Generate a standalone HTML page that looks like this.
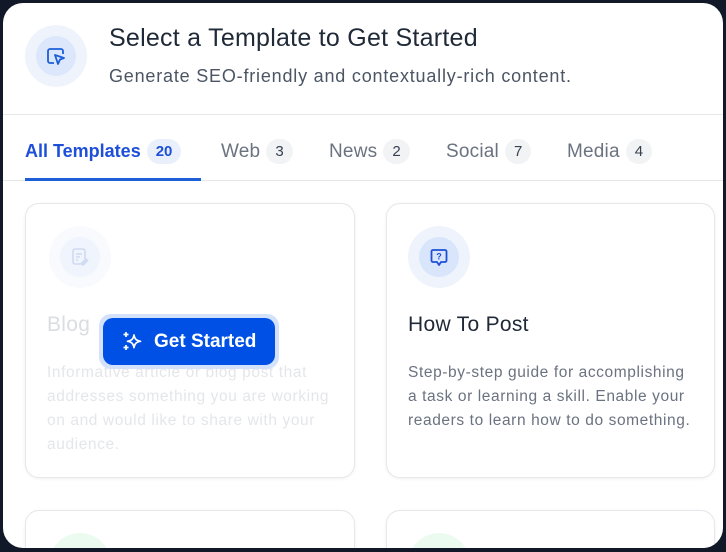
<!DOCTYPE html>
<html><head><style>
*{margin:0;padding:0;box-sizing:border-box}
html,body{width:726px;height:552px;overflow:hidden}
body{background:#111827;font-family:"Liberation Sans",sans-serif;position:relative}
.panel{position:absolute;left:3px;top:3px;width:720px;height:545px;background:#fff;border-radius:20px;overflow:hidden}
.abs{position:absolute}
.circ{position:absolute;border-radius:50%}
.card{position:absolute;border:1px solid #e5e7eb;border-radius:14px;background:#fff;box-shadow:0 1px 3px rgba(0,0,0,.06)}
.tab{position:absolute;top:136px;font-size:19px;color:#6b7280;white-space:nowrap;letter-spacing:0.2px}
.badge{display:inline-block;background:#f1f3f5;border-radius:14px;font-size:15px;color:#374151;padding:4px 9px;margin-left:6px;vertical-align:1px;letter-spacing:0}
.desc{font-size:15.5px;line-height:24px;color:#6b7280;letter-spacing:0.6px;white-space:nowrap}
</style></head><body>
<div class="panel">
 <div class="circ" style="left:22px;top:22px;width:62px;height:62px;background:#eff4fc"></div>
 <div class="circ" style="left:33px;top:33px;width:40px;height:40px;background:#dce7fb"></div>
 <svg class="abs" style="left:43px;top:43px" width="20" height="20" viewBox="0 0 20 20" fill="none" stroke="#1d5fd9" stroke-width="1.8" stroke-linejoin="round"><path d="M8 17H4a2 2 0 0 1-2-2V5a2 2 0 0 1 2-2h11a2 2 0 0 1 2 2v3"/><path d="M9 9l9 3-4 1.5L12 18z"/></svg>
 <div class="abs" style="left:106px;top:21px;font-size:25px;color:#1f2937;letter-spacing:0.25px;white-space:nowrap">Select a Template to Get Started</div>
 <div class="abs" style="left:106px;top:63px;font-size:18px;color:#4b5563;letter-spacing:0.8px;white-space:nowrap">Generate SEO-friendly and contextually-rich content.</div>
 <div class="abs" style="left:0;top:111px;width:720px;height:1px;background:#e5e7eb"></div>
 <div class="tab" style="left:22px;color:#1d4fd8;font-weight:bold;font-size:18px;letter-spacing:0">All Templates<span class="badge" style="background:#eaf0fb;color:#1d4fd8;font-weight:bold">20</span></div>
 <div class="tab" style="left:218px">Web<span class="badge">3</span></div>
 <div class="tab" style="left:326px">News<span class="badge">2</span></div>
 <div class="tab" style="left:443px">Social<span class="badge">7</span></div>
 <div class="tab" style="left:564px">Media<span class="badge">4</span></div>
 <div class="abs" style="left:0;top:177px;width:720px;height:1px;background:#e5e7eb"></div>
 <div class="abs" style="left:22px;top:175px;width:176px;height:3px;background:#1d5fd9"></div>

 <div class="card" style="left:22px;top:200px;width:330px;height:275px">
  <div class="circ" style="left:23px;top:22px;width:62px;height:62px;background:#f8fafe"></div>
  <div class="circ" style="left:34px;top:33px;width:40px;height:40px;background:#f0f4fd"></div>
  <svg class="abs" style="left:44px;top:43px" width="20" height="20" viewBox="0 0 20 20" fill="none" stroke="#cfdaf3" stroke-width="1.6"><rect x="3" y="2" width="12" height="15" rx="2"/><path d="M6 7h6M6 10h4M6 13h2M11 17l5-5 1.5 1.5-5 5"/></svg>
  <div class="abs" style="left:21px;top:109px;font-size:21px;color:#dadde1;letter-spacing:0.3px">Blog</div>
  <div class="abs desc" style="left:21px;top:157px;color:#e4e6ea">Informative article or blog post that<br>addresses something you are working<br>on and would like to share with your<br>audience.</div>
 </div>
 <div class="abs" style="left:96px;top:311px;width:180px;height:55px;border-radius:12px;background:#d3e1fb"></div>
 <div class="abs" style="left:100px;top:315px;width:172px;height:47px;border-radius:10px;background:#0050e6;color:#fff;font-size:19px;font-weight:bold;line-height:47px;padding-left:51px">Get Started</div>
 <svg class="abs" style="left:118px;top:327px" width="24" height="24" viewBox="0 0 24 24" fill="none" stroke="#fff" stroke-width="1.7" stroke-linejoin="round"><path d="M13 5c.7 4 2.3 5.6 6.5 6.3C15.3 12 13.7 13.6 13 17.6c-.7-4-2.3-5.6-6.5-6.3C10.7 10.6 12.3 9 13 5z"/><path d="M5 2v5M2.5 4.5h5M5 15v5M2.5 17.5h5"/></svg>

 <div class="card" style="left:383px;top:200px;width:329px;height:275px">
  <div class="circ" style="left:21px;top:22px;width:62px;height:62px;background:#eff4fc"></div>
  <div class="circ" style="left:32px;top:33px;width:40px;height:40px;background:#d8e5fb"></div>
  <svg class="abs" style="left:42px;top:43px" width="20" height="20" viewBox="0 0 20 20" fill="none" stroke="#1d4fd8" stroke-width="1.8" stroke-linejoin="round"><path d="M4 3h12a1.5 1.5 0 0 1 1.5 1.5v9A1.5 1.5 0 0 1 16 15h-4l-2 3-2-3H4a1.5 1.5 0 0 1-1.5-1.5v-9A1.5 1.5 0 0 1 4 3z"/><text x="10" y="12.5" font-size="9" font-weight="bold" fill="#1d4fd8" stroke="none" text-anchor="middle" font-family="Liberation Sans">?</text></svg>
  <div class="abs" style="left:21px;top:109px;font-size:21px;color:#1f2937;letter-spacing:0.3px">How To Post</div>
  <div class="abs desc" style="left:21px;top:157px">Step-by-step guide for accomplishing<br>a task or learning a skill. Enable your<br>readers to learn how to do something.</div>
 </div>

 <div class="card" style="left:22px;top:507px;width:330px;height:50px;overflow:hidden">
  <div class="circ" style="left:23px;top:22px;width:62px;height:62px;background:#ecfbef"></div>
 </div>
 <div class="card" style="left:383px;top:507px;width:329px;height:50px;overflow:hidden">
  <div class="circ" style="left:21px;top:22px;width:62px;height:62px;background:#ecfbef"></div>
 </div>
</div>
</body></html>
